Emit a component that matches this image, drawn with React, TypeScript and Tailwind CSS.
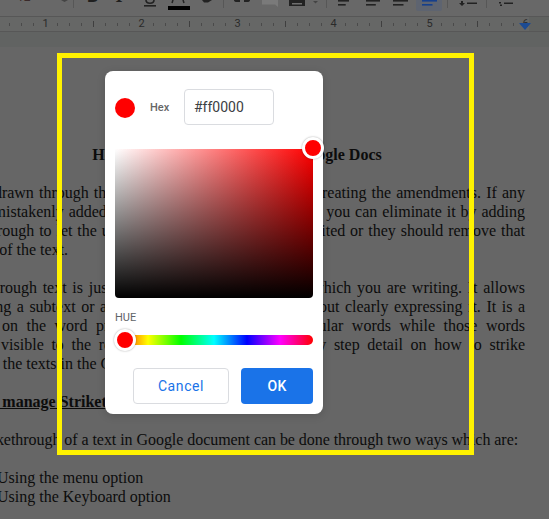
const Sep = ({ ml }: { ml: string }) => <div className={`${ml} h-[8px] w-px shrink-0 bg-[#575757]`} />;

const Bars = ({ c = "#222", w = 14 }: { c?: string; w?: number }) => (
  <svg width={w} height="6" viewBox={`0 0 ${w} 6`} className="shrink-0">
    <rect x="0" y="0" width={w} height="1.6" fill={c} />
    <rect x="0" y="4" width={w * 0.7} height="1.6" fill={c} />
  </svg>
);

function Toolbar() {
  return (
    <div className="flex h-[17px] items-start overflow-hidden border-b border-[#575757] bg-[#686868] font-['Roboto',sans-serif] text-[#1f1f1f]">
      <span className="ml-[17px] -mt-[10px] w-[12px] text-[12px] leading-[14px] text-[#3a2a2a]">12</span>
      <svg width="7" height="3" className="ml-[32px] shrink-0"><path d="M0 0h7L3.5 2z" fill="#444" /></svg>
      <Sep ml="ml-[5px]" />
      <span className="ml-[13px] -mt-[11px] w-[11px] text-[18px] font-bold leading-[14px]">B</span>
      <span className="ml-[16px] -mt-[11px] w-[10px] text-center font-['Liberation_Serif',serif] text-[18px] font-bold leading-[14px]">I</span>
      <svg width="12" height="7" className="ml-[20px] shrink-0">
        <path d="M2 0c0 2.500 1.500 3.200 4 3.200S10 2.500 10 0" fill="none" stroke="#222" strokeWidth="1.600" />
        <rect y="5" width="12" height="1.600" fill="#222" />
      </svg>
      <svg width="22" height="10" className="ml-[12px] shrink-0">
        <path d="M5 0l-1 3M15 0l1 3" stroke="#222" strokeWidth="1.500" />
        <rect y="6" width="22" height="4" fill="#000" />
      </svg>
      <svg width="10" height="3" className="ml-[12px] shrink-0"><path d="M0 0h10L6 2.500H2z" fill="#222" /></svg>
      <Sep ml="ml-[11px]" />
      <svg width="18" height="3" className="ml-[9px] shrink-0"><path d="M1 0c0 1.500 1 2 3 2h3V0M17 0c0 1.500-1 2-3 2h-3V0" fill="#222" /></svg>
      <svg width="16" height="7" className="ml-[11px] shrink-0"><path d="M0 0h16v7l-3-2.500H0z" fill="#7a7a7a" /></svg>
      <svg width="16" height="6" className="ml-[11px] shrink-0"><path d="M0 0h16v6H0z" fill="#222" /><path d="M3 3h10v1.500H3z" fill="#6e6e6e" /></svg>
      <svg width="5" height="3" className="ml-[8px] mt-[1px] shrink-0"><path d="M0 0h5L2.500 2.500z" fill="#444" /></svg>
      <Sep ml="ml-[8px]" />
      <div className="ml-[11px] shrink-0"><Bars w={11} /></div>
      <div className="ml-[17px] flex w-[14px] shrink-0 flex-col items-center"><Bars w={14} /></div>
      <div className="ml-[13px] shrink-0"><Bars w={15} /></div>
      <div className="ml-[8px] flex h-[11px] w-[26px] shrink-0 justify-center rounded-b-[2px] bg-[#5e6470]">
        <Bars c="#16408c" w={15} />
      </div>
      <Sep ml="ml-[5px]" />
      <svg width="18" height="5" className="ml-[11px] mt-[1px] shrink-0"><path d="M2 0h2v2h2L3 5 0 2h2zM8 1.500h10v1.600H8z" fill="#222" /></svg>
      <Sep ml="ml-[9px]" />
      <svg width="14" height="5" className="ml-[12px] mt-[1px] shrink-0"><path d="M0 1h2v1.600H0zM1 3.500h2V5H1zM5 1.500h9v1.600H5z" fill="#222" /></svg>
    </div>
  );
}

const Slot = ({ major = false }: { major?: boolean }) => (
  <div className="flex w-[12px] shrink-0 items-center justify-end">
    <div className={major ? "h-[6px] w-px bg-[#3f3f3f]" : "h-[3px] w-px bg-[#4a4a4a]"} />
  </div>
);

function Inch({ n }: { n: number }) {
  return (
    <div className="flex w-[96px] shrink-0 items-center">
      <Slot /><Slot /><Slot />
      <div className="flex w-[12px] shrink-0 justify-end">
        <span className="-mr-[6px] w-[12px] text-center text-[11px] leading-[12px] text-[#2a2a2a]">{n}</span>
      </div>
      <Slot /><Slot /><Slot /><Slot major />
    </div>
  );
}

function Ruler() {
  return (
    <div className="relative flex h-[15px] items-center overflow-hidden border-b border-[#575757] bg-[#666766] font-['Roboto',sans-serif]">
      <div className="-ml-[2.500px] flex">
        {[1, 2, 3, 4, 5, 6].map((n) => <Inch key={n} n={n} />)}
      </div>
      <div className="absolute right-0 top-0 h-[14px] w-[20px] bg-[#606260]" />
      <svg width="12" height="7" className="absolute left-[519px] top-[6px]"><path d="M0 0h12L6 7z" fill="#1c4b93" /></svg>
    </div>
  );
}

const J = ({ children }: { children: React.ReactNode }) => (
  <p className="[text-align-last:justify]">{children}</p>
);

function Doc() {
  return (
    <div className="-ml-[51px] w-[576px] pt-[98px] text-justify font-['Liberation_Serif',serif] text-[16px] leading-[19px] text-[#0c0c0c]">
      <h2 className="mb-[19px] text-center font-bold">How to Strikethrough Text in Google Docs</h2>
      <div className="mb-[19px]">
        <J>A line drawn through the text. It is generally useful for creating the amendments. If any</J>
        <J>text is mistakenly added to your Google documents, then you can eliminate it by adding</J>
        <J>strikethrough to let the user know that all the text was edited or they should remove that</J>
        <p>portion of the text.</p>
      </div>
      <div className="mb-[19px]">
        <J>Strikethrough text is just like a line on all the texts in which you are writing. It allows</J>
        <J>providing a subtext or a meaning to the whole text without clearly expressing it. It is a</J>
        <J>feature on the word processor that crosses out particular words while those words</J>
        <J>remain visible to the readers. Here we see the step by step detail on how to strike</J>
        <p>through the texts in the Google Docs.</p>
      </div>
      <p className="mb-[19px] font-bold underline">How to manage Strikethrough text in Google Docs</p>
      <p className="-ml-[2px] mb-[19px] tracking-[-0.05px]">The strikethrough of a text in Google document can be done through two ways which are:</p>
      <ol className="list-decimal pl-[48px]">
        <li>Using the menu option</li>
        <li>Using the Keyboard option</li>
      </ol>
    </div>
  );
}

const Handle = ({ pos }: { pos: string }) => (
  <div className={`absolute box-content size-[16px] rounded-full border-[3px] border-white bg-[#ff0000] shadow-[0_0_2px_rgba(0,0,0,0.35)] ${pos}`} />
);

function Dialog() {
  return (
    <div className="absolute left-[105px] top-[71px] h-[343px] w-[218px] rounded-[8px] bg-white px-[10px] pt-[18px] font-['Roboto',sans-serif] shadow-[0_2px_8px_rgba(0,0,0,0.15)]">
      <div className="flex h-[36px] items-center">
        <div className="mt-[2px] size-[20px] rounded-full bg-[#ff0000]" />
        <span className="ml-[15px] mt-[2px] w-[34px] text-[11px] font-medium text-[#666666]">Hex</span>
        <div className="flex h-[36px] w-[90px] items-center rounded-[4px] border border-[#dadce0] pl-[9px] text-[14px] text-[#3c4043]">#ff0000</div>
      </div>
      <div className="relative mt-[24px] h-[149px] rounded-b-[4px] bg-[linear-gradient(to_bottom,transparent,#000),linear-gradient(to_right,#fff,#f00)]">
        <Handle pos="-right-[11px] -top-[12px]" />
      </div>
      <div className="mt-[13px] text-[11px] leading-[14px] text-[#5f6368]">HUE</div>
      <div className="relative mt-[10px] h-[10px] rounded-full bg-[linear-gradient(to_right,#f00,#ff0,#0f0,#0ff,#00f,#f0f,#f00)]">
        <Handle pos="-left-[1px] -top-[6px]" />
      </div>
      <div className="mt-[23px] flex justify-end gap-[12px]">
        <button className="h-[36px] w-[96px] rounded-[4px] border border-[#dadce0] bg-white text-[14px] font-normal tracking-[0.6px] text-[#1a73e8]">Cancel</button>
        <button className="h-[36px] w-[72px] rounded-[4px] bg-[#1a73e8] text-[14px] font-medium tracking-[0.25px] text-white">OK</button>
      </div>
    </div>
  );
}

export default function App() {
  return (
    <div className="relative h-[519px] w-[549px] overflow-hidden bg-[#666666]">
      <Toolbar />
      <Ruler />
      <div className="h-[15px] bg-[#616362]" />
      <Doc />
      <div className="absolute left-[57px] top-[53px] h-[402px] w-[417px] border-[5px] border-[#fff200]" />
      <Dialog />
    </div>
  );
}
